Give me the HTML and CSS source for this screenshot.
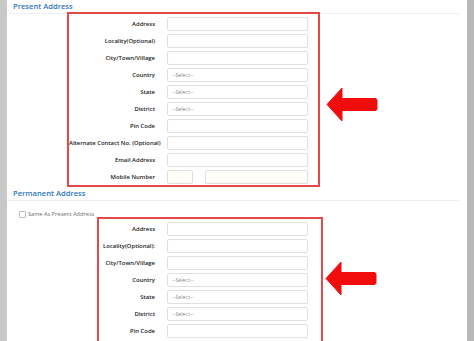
FILE: index.html
```html
<!DOCTYPE html>
<html lang="en">
<head>
    <meta charset="UTF-8">
    <meta name="viewport" content="width=device-width, initial-scale=1.0">
    <title>Address Details</title>
    <link rel="stylesheet" href="styles.css">
</head>
<body>
    <div class="pagina">
        <div class="faixa esquerda"></div>
        <div class="conteudo">
            <h2 class="titulo">Present Address</h2>
            <div class="caixa caixa-um">
                <div class="linha"><label>Address</label><div class="campo"></div></div>
                <div class="linha"><label>Locality(Optional)</label><div class="campo"></div></div>
                <div class="linha"><label>City/Town/Village</label><div class="campo"></div></div>
                <div class="linha"><label>Country</label><div class="campo select">--Select--</div></div>
                <div class="linha"><label>State</label><div class="campo select">--Select--</div></div>
                <div class="linha"><label>District</label><div class="campo select">--Select--</div></div>
                <div class="linha"><label>Pin Code</label><div class="campo"></div></div>
                <div class="linha"><label>Alternate Contact No. (Optional)</label><div class="campo"></div></div>
                <div class="linha"><label>Email Address</label><div class="campo"></div></div>
                <div class="linha"><label>Mobile Number</label>
                    <div class="mobile"><div class="campo codigo"></div><div class="campo numero"></div></div>
                </div>
            </div>

            <h2 class="titulo">Permanent Address</h2>
            <div class="permanente">
                <div class="mesmo"><span class="check"></span>Same As Present Address</div>
                <div class="caixa caixa-dois">
                    <div class="linha"><label>Address</label><div class="campo"></div></div>
                    <div class="linha"><label>Locality(Optional):</label><div class="campo"></div></div>
                    <div class="linha"><label>City/Town/Village</label><div class="campo"></div></div>
                    <div class="linha"><label>Country</label><div class="campo select">--Select--</div></div>
                    <div class="linha"><label>State</label><div class="campo select">--Select--</div></div>
                    <div class="linha"><label>District</label><div class="campo select">--Select--</div></div>
                    <div class="linha"><label>Pin Code</label><div class="campo"></div></div>
                </div>
            </div>

            <!-- setas vermelhas -->
            <svg class="seta seta-um" width="52" height="35" viewBox="0 0 52 35">
                <path d="M1 17.5 L16 1 L16 11.5 L49 11.5 Q51 11.5 51 13.5 L51 21.5 Q51 23.5 49 23.5 L16 23.5 L16 34 Z" fill="#f20d0d" stroke="#f20d0d" stroke-width="1" stroke-linejoin="round"/>
            </svg>
            <svg class="seta seta-dois" width="52" height="35" viewBox="0 0 52 35">
                <path d="M1 17.5 L16 1 L16 11.5 L49 11.5 Q51 11.5 51 13.5 L51 21.5 Q51 23.5 49 23.5 L16 23.5 L16 34 Z" fill="#f20d0d" stroke="#f20d0d" stroke-width="1" stroke-linejoin="round"/>
            </svg>
        </div>
        <div class="faixa direita"></div>
    </div>
</body>
</html>
```

FILE: styles.css
```css
body,html{
    height: 100%;
    margin: 0;
    font-family: 'Open Sans', 'Liberation Sans', Arial, sans-serif;
    background-color: white;
    overflow: hidden;
}
.pagina{
    display: flex;
    height: 100%;
}
.faixa{
    width: 7px;
    flex-shrink: 0;
}
.esquerda{
    background-color: rgb(200, 200, 200);
}
.direita{
    background-color: rgb(184, 184, 184);
}
.conteudo{
    flex: 1;
    position: relative;
    background-color: white;
}
.titulo{
    margin: 0 7px 0 0;
    padding-left: 6px;
    height: 13px;
    line-height: 13px;
    font-size: 7.6px;
    font-weight: 600;
    color: rgb(48, 118, 188);
    border-bottom: 1px solid rgb(238, 238, 238);
}
.caixa{
    border: 2px solid rgb(228, 72, 72);
    padding: 1px 0 0 0;
    display: flex;
    flex-direction: column;
    box-sizing: border-box;
}
.caixa-um{
    margin: -2px 0 0 60px;
    width: 253px;
    height: 175px;
}
.caixa-dois{
    margin: 16px 0 0 0;
    width: 226px;
    height: 130px;
}
.linha{
    display: flex;
    align-items: center;
    height: 17px;
    flex-shrink: 0;
}
.linha label{
    text-align: right;
    font-size: 5.9px;
    font-weight: 600;
    color: rgb(34, 34, 34);
    white-space: nowrap;
    margin-right: 12px;
}
.caixa-um .linha label{
    width: 86px;
}
.caixa-dois .linha label{
    width: 56px;
}
.campo{
    width: 141px;
    height: 14px;
    box-sizing: border-box;
    border: 1px solid rgb(224, 224, 224);
    border-radius: 2px;
    background-color: white;
}
.select{
    font-size: 5.3px;
    color: rgb(140, 140, 140);
    line-height: 12px;
    padding-left: 4px;
}
.mobile{
    display: flex;
    width: 141px;
    justify-content: space-between;
}
.codigo{
    width: 26px;
    background-color: rgb(255, 254, 248);
}
.numero{
    width: 103px;
    background-color: rgb(255, 254, 248);
}
.permanente{
    display: flex;
    align-items: flex-start;
}
.mesmo{
    display: flex;
    align-items: center;
    margin: 8px 0 0 12px;
    width: 78px;
    height: 10px;
    font-size: 5.6px;
    color: rgb(110, 110, 110);
    white-space: nowrap;
}
.check{
    width: 5px;
    height: 5px;
    border: 1px solid rgb(190, 190, 190);
    border-radius: 1px;
    margin-right: 2px;
    flex-shrink: 0;
}
.seta{
    position: absolute;
}
.seta-um{
    left: 319px;
    top: 87px;
}
.seta-dois{
    left: 318px;
    top: 261px;
}
```
